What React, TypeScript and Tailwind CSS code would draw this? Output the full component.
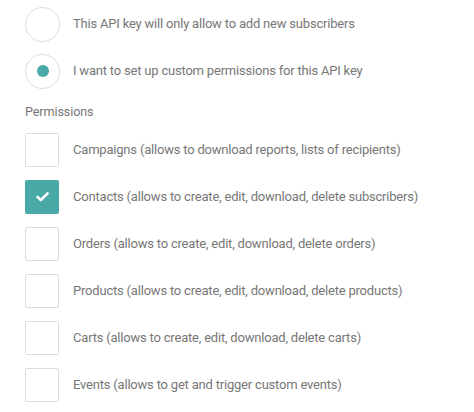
import React from "react";

const font = { fontFamily: "Roboto, 'Liberation Sans', sans-serif" };

function Radio({ checked, label }: { checked?: boolean; label: string }) {
  return (
    <div className="flex items-center h-[34px]">
      <div className="w-[35px] h-[35px] rounded-full border border-[#dcdcdc] bg-white flex items-center justify-center shrink-0">
        {checked && <div className="w-[12px] h-[12px] rounded-full bg-[#48a9a6]" />}
      </div>
      <span className="ml-[13px] text-[13px] tracking-[-0.2px] text-[#777777] whitespace-nowrap">{label}</span>
    </div>
  );
}

function Check({ checked, label }: { checked?: boolean; label: string }) {
  return (
    <div className="flex items-center h-[34px]">
      <div
        className={
          checked
            ? "w-[34px] h-[34px] rounded-[2px] bg-[#48a9a6] flex items-center justify-center shrink-0"
            : "w-[34px] h-[34px] rounded-[2px] border border-[#dcdcdc] bg-white shrink-0"
        }
      >
        {checked && (
          <svg width="13" height="10" viewBox="0 0 13 10">
            <path d="M1.5 5 L4.8 8 L11.5 1.5" stroke="white" strokeWidth="2.6" fill="none" strokeLinecap="round" strokeLinejoin="round" />
          </svg>
        )}
      </div>
      <span className="ml-[14px] text-[13px] tracking-[-0.2px] text-[#777777] whitespace-nowrap">{label}</span>
    </div>
  );
}

export default function App() {
  return (
    <div className="w-[474px] h-[412px] bg-white pl-[25px] pt-[7px]" style={font}>
      <div className="flex flex-col gap-[13px]">
        <Radio label="This API key will only allow to add new subscribers" />
        <Radio checked label="I want to set up custom permissions for this API key" />
      </div>
      <div className="mt-[15px] h-[18px] text-[12.6px] tracking-[-0.1px] text-[#777777] leading-[18px]">Permissions</div>
      <div className="mt-[12px] flex flex-col gap-[13px]">
        <Check label="Campaigns (allows to download reports, lists of recipients)" />
        <Check checked label="Contacts (allows to create, edit, download, delete subscribers)" />
        <Check label="Orders (allows to create, edit, download, delete orders)" />
        <Check label="Products (allows to create, edit, download, delete products)" />
        <Check label="Carts (allows to create, edit, download, delete carts)" />
        <Check label="Events (allows to get and trigger custom events)" />
      </div>
    </div>
  );
}
